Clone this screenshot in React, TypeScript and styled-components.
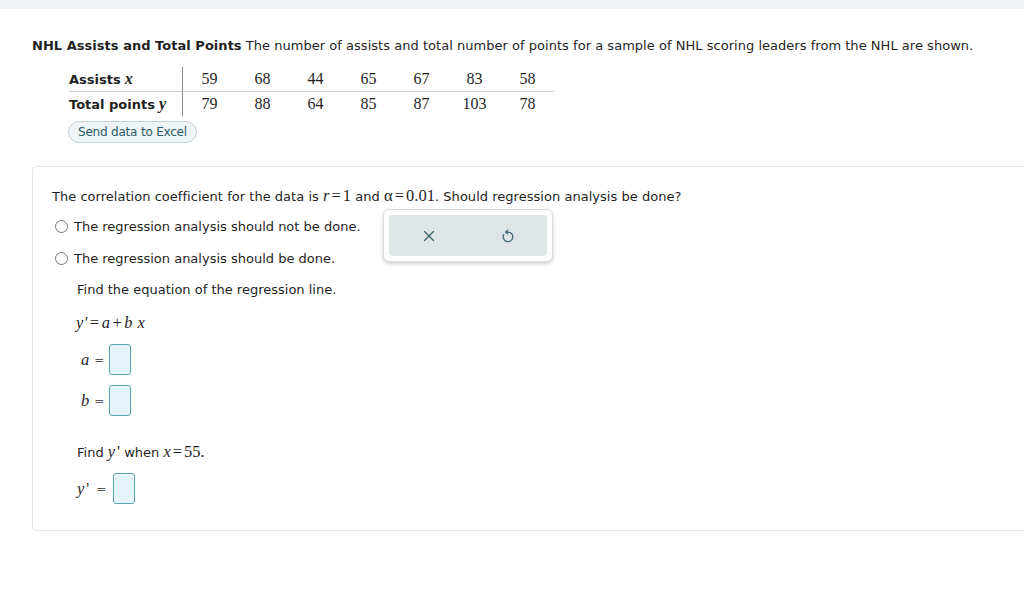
import React from "react";
import styled, { createGlobalStyle } from "styled-components";

const Global = createGlobalStyle`
  html, body { margin: 0; padding: 0; background: #fff; }
  body { font-family: "DejaVu Sans", Verdana, sans-serif; color: #1f1f1f; font-size: 13px; }
`;

const TopBar = styled.div`
  height: 9px;
  background: #f0f1f3;
`;

const Page = styled.div`
  padding: 29px 0 0 32px;
`;

const Intro = styled.p`
  margin: 0;
  font-size: 13px;
  line-height: 16px;
  letter-spacing: 0.03px;
  white-space: nowrap;
  b { font-weight: bold; }
`;

const DataBlock = styled.div`
  margin: 13px 0 0 37px;
`;

const Table = styled.div`
  display: grid;
  grid-template-columns: 114px repeat(7, 53px);
  width: max-content;
`;

const LabelCell = styled.div<{ $top?: boolean }>`
  height: 24px;
  display: flex;
  align-items: center;
  font-weight: bold;
  font-size: 13px;
  border-right: 1px solid #8a8a8a;
  ${(p) => (p.$top ? "border-bottom: 1px solid #c9c9c9;" : "")}
`;

const NumCell = styled.div<{ $top?: boolean }>`
  height: 24px;
  display: flex;
  align-items: center;
  justify-content: center;
  font-family: "Liberation Serif", "Times New Roman", serif;
  font-size: 16px;
  ${(p) => (p.$top ? "border-bottom: 1px solid #c9c9c9;" : "")}
`;

const Var = styled.i`
  font-family: "Liberation Serif", "Times New Roman", serif;
  font-size: 16px;
  font-weight: bold;
  margin-left: 4px;
`;

const ExcelButton = styled.button`
  margin-top: 5px;
  margin-left: -1px;
  height: 22px;
  padding: 0 9px;
  border-radius: 11px;
  border: 1px solid #c3d2d6;
  background: #eef4f5;
  color: #2b5c6b;
  font-family: "DejaVu Sans", Verdana, sans-serif;
  font-size: 12px;
  letter-spacing: -0.2px;
  display: block;
`;

const Card = styled.div`
  position: relative;
  margin-top: 23px;
  width: 1000px;
  height: 365px;
  border: 1px solid #e2e4e6;
  border-radius: 4px;
  padding: 20px 0 0 19px;
  box-sizing: border-box;
`;

const Question = styled.p`
  margin: 0;
  line-height: 18px;
  font-size: 13px;
  letter-spacing: 0.03px;
`;

const Serif = styled.span`
  font-family: "Liberation Serif", "Times New Roman", serif;
  font-size: 16.5px;
`;

const SerifI = styled.i`
  font-family: "Liberation Serif", "Times New Roman", serif;
  font-size: 16.5px;
`;

const Prime = styled.span`
  font-style: normal;
  margin-left: 2px;
`;

const Op = styled.span`
  font-family: "Liberation Serif", "Times New Roman", serif;
  font-style: normal;
  font-size: 16.5px;
  margin: 0 2px;
`;

const Options = styled.div`
  margin-top: 11px;
  display: flex;
  flex-direction: column;
  gap: 14px;
`;

const Option = styled.label`
  display: flex;
  align-items: center;
  gap: 6px;
  padding-left: 3px;
  height: 18px;
  font-size: 13px;
`;

const Radio = styled.span`
  width: 11px;
  height: 11px;
  border: 1px solid #7a7a7a;
  border-radius: 50%;
  background: #fff;
`;

const Sub = styled.div`
  padding-left: 25px;
  margin-top: 14px;
`;

const Line = styled.p<{ $mt?: number }>`
  margin: ${(p) => p.$mt ?? 0}px 0 0 0;
  font-size: 13px;
  line-height: 18px;
`;

const Equation = styled.div`
  margin-top: 15px;
  margin-left: -1px;
  font-family: "Liberation Serif", "Times New Roman", serif;
  font-size: 16.5px;
  font-style: italic;
  line-height: 18px;
  letter-spacing: 0.5px;
`;

const AnswerRow = styled.div<{ $indent: number; $mt: number; $gap?: number }>`
  display: flex;
  align-items: center;
  margin-top: ${(p) => p.$mt}px;
  padding-left: ${(p) => p.$indent}px;
  gap: ${(p) => p.$gap ?? 5}px;
  font-family: "Liberation Serif", "Times New Roman", serif;
  font-size: 16.5px;
  i { font-style: italic; }
`;

const Eq = styled.span`
  font-family: "DejaVu Sans", sans-serif;
  font-size: 12px;
  color: #555;
`;

const Box = styled.span`
  width: 20px;
  height: 29px;
  border: 1px solid #5aa4b2;
  border-radius: 3px;
  background: #e5f4f8;
  display: inline-block;
`;

const Popup = styled.div`
  position: absolute;
  left: 350px;
  top: 42px;
  width: 170px;
  height: 53px;
  box-sizing: border-box;
  padding: 5px;
  background: #fff;
  border: 1px solid #d6dcdf;
  border-radius: 6px;
  box-shadow: 0 2px 4px rgba(0, 0, 0, 0.18);
`;

const PopInner = styled.div`
  height: 41px;
  background: #dfe5e7;
  border-radius: 4px;
  display: grid;
  grid-template-columns: 1fr 1fr;
  align-items: center;
  justify-items: center;
`;

const IconBtn = styled.span`
  display: flex;
  align-items: center;
  justify-content: center;
  color: #3e6570;
`;

export default function App() {
  const xs = [59, 68, 44, 65, 67, 83, 58];
  const ys = [79, 88, 64, 85, 87, 103, 78];
  return (
    <>
      <Global />
      <TopBar />
      <Page>
        <Intro>
          <b>NHL Assists and Total Points</b> The number of assists and total number of points for a sample of NHL scoring leaders from the NHL are shown.
        </Intro>
        <DataBlock>
          <Table>
            <LabelCell $top>
              Assists<Var>x</Var>
            </LabelCell>
            {xs.map((v, i) => (
              <NumCell $top key={"x" + i}>{v}</NumCell>
            ))}
            <LabelCell>
              Total points<Var>y</Var>
            </LabelCell>
            {ys.map((v, i) => (
              <NumCell key={"y" + i}>{v}</NumCell>
            ))}
          </Table>
          <ExcelButton>Send data to Excel</ExcelButton>
        </DataBlock>
        <Card>
          <Question>
            The correlation coefficient for the data is <SerifI>r</SerifI><Op>=</Op><Serif>1</Serif> and <Serif>α</Serif><Op>=</Op><Serif>0.01</Serif>. Should regression analysis be done?
          </Question>
          <Options>
            <Option><Radio />The regression analysis should not be done.</Option>
            <Option><Radio />The regression analysis should be done.</Option>
          </Options>
          <Sub>
            <Line>Find the equation of the regression line.</Line>
            <Equation>y'<Op>=</Op>a<Op>+</Op>b x</Equation>
            <AnswerRow $indent={4} $mt={12}>
              <i>a</i><Eq>=</Eq><Box />
            </AnswerRow>
            <AnswerRow $indent={4} $mt={10}>
              <i>b</i><Eq>=</Eq><Box />
            </AnswerRow>
            <Line $mt={27}>
              Find <SerifI>y<Prime>'</Prime></SerifI> when <SerifI>x</SerifI><Op>=</Op><Serif>55.</Serif>
            </Line>
            <AnswerRow $indent={0} $mt={11} $gap={7}>
              <i>y<Prime>'</Prime></i><Eq>=</Eq><Box />
            </AnswerRow>
          </Sub>
          <Popup>
            <PopInner>
              <IconBtn>
                <svg width="12" height="12" viewBox="0 0 12 12" fill="none" stroke="currentColor" strokeWidth="1.4" strokeLinecap="round">
                  <path d="M1.5 1.5 L10.5 10.5 M10.5 1.5 L1.5 10.5" />
                </svg>
              </IconBtn>
              <IconBtn>
                <svg width="14" height="16" viewBox="0 0 16 16" fill="none" stroke="currentColor" strokeWidth="1.5" strokeLinecap="round" strokeLinejoin="round">
                  <path d="M7.5 1.5 L5.5 3.5 L7.5 5.5" />
                  <path d="M5.5 3.5 H8 A5.5 5.5 0 1 1 3.2 6.3" />
                </svg>
              </IconBtn>
            </PopInner>
          </Popup>
        </Card>
      </Page>
    </>
  );
}
